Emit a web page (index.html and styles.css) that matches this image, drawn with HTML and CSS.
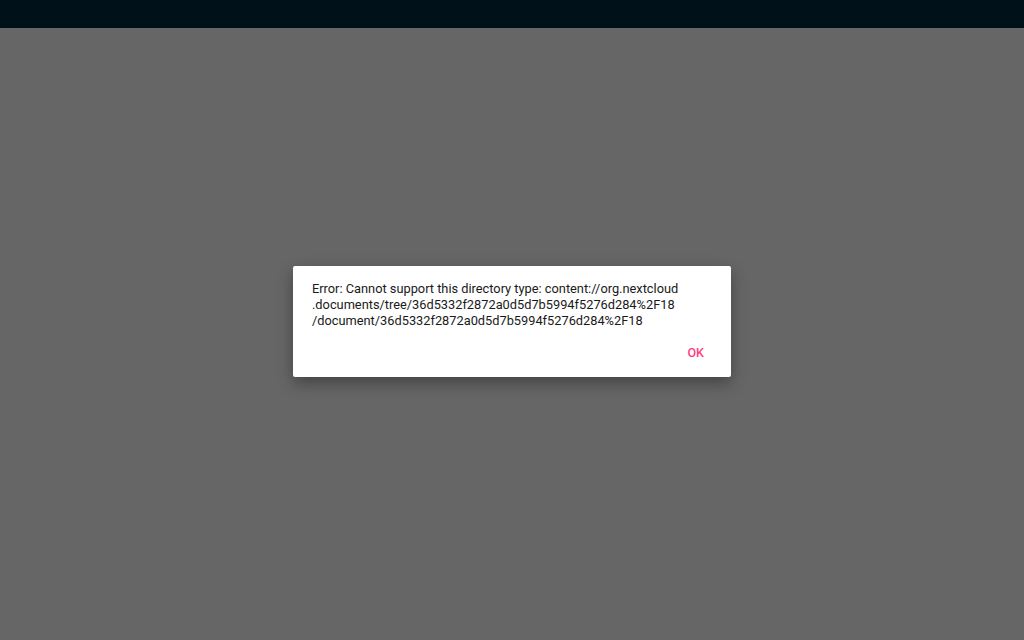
FILE: index.html
```html
<!DOCTYPE html>
<html>
<head>
<meta charset="utf-8">
<link rel="stylesheet" href="styles.css">
</head>
<body>
<div class="topbar"></div>
<div class="stage">
  <div class="dialog">
    <div class="message">Error: Cannot support this directory type: content://org.nextcloud<br>.documents/tree/36d5332f2872a0d5d7b5994f5276d284%2F18<br>/document/36d5332f2872a0d5d7b5994f5276d284%2F18</div>
    <div class="actions"><span class="ok">OK</span></div>
  </div>
</div>
</body>
</html>
```
FILE: styles.css
```css
html, body {
  margin: 0;
  padding: 0;
  width: 1024px;
  height: 640px;
  overflow: hidden;
  font-family: Roboto, "Liberation Sans", sans-serif;
}
body {
  display: flex;
  flex-direction: column;
  background: #666666;
}
.topbar {
  height: 28px;
  background: #00111a;
  flex: none;
}
.stage {
  flex: 1;
  display: flex;
  justify-content: center;
  align-items: flex-start;
  padding-top: 238px;
}
.dialog {
  width: 438px;
  height: 111px;
  box-sizing: border-box;
  background: #ffffff;
  border-radius: 2px;
  box-shadow: 0 6px 16px rgba(0,0,0,0.35);
  padding: 15px 27px 0 19px;
  display: flex;
  flex-direction: column;
}
.message {
  font-size: 12.8px;
  line-height: 16px;
  color: #1a1a1a;
  white-space: nowrap;
}
.actions {
  display: flex;
  justify-content: flex-end;
  margin-top: 16px;
}
.ok {
  font-size: 12.5px;
  line-height: 16px;
  font-weight: 500;
  color: #ff3d7f;
}
```
